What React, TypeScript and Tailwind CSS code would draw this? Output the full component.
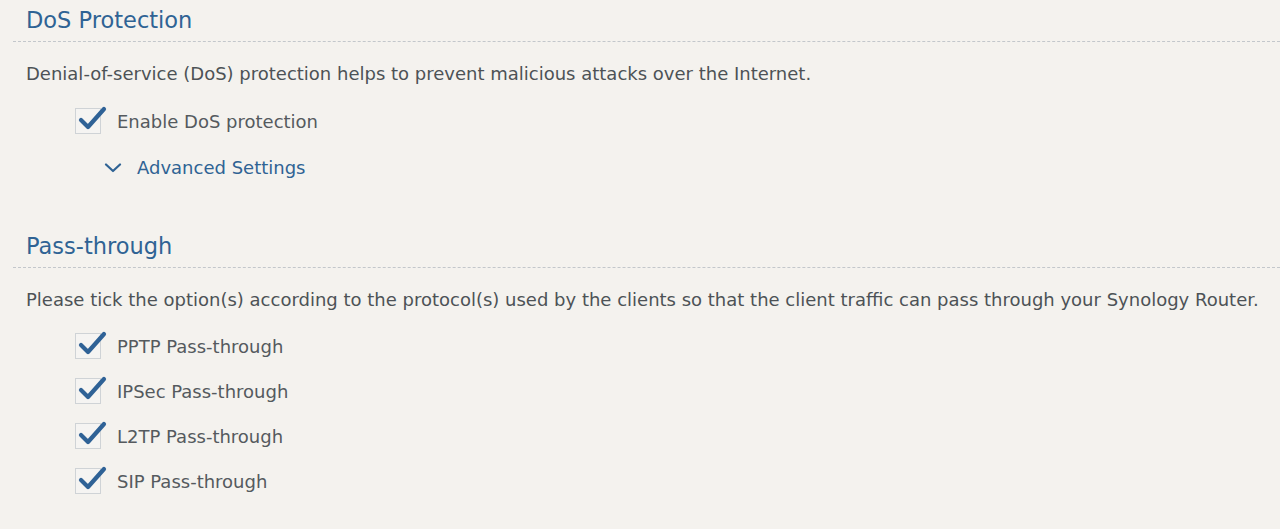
import { ReactNode } from "react";

function CheckIcon() {
  return (
    <svg viewBox="0 0 30 28" className="absolute -top-[4px] left-[1px] h-[28px] w-[30px]">
      <path d="M4 15 L11 22 L27 4" fill="none" stroke="#2f6296" strokeWidth="4.2" strokeLinecap="round" strokeLinejoin="round" />
    </svg>
  );
}

function Checkbox({ label }: { label: string }) {
  return (
    <div className="flex h-[26px] items-center gap-[16px]">
      <div className="relative h-[26px] w-[26px] shrink-0 border border-[#cfd3d6] bg-[#f5f4f2]">
        <CheckIcon />
      </div>
      <span className="text-[18px] text-[#555a5e]">{label}</span>
    </div>
  );
}

function Section({ title, desc, children }: { title: string; desc: string; children: ReactNode }) {
  return (
    <section>
      <h2 className="pl-[26px] pt-[4px] text-[22.5px] leading-[32px] text-[#2f6394]">{title}</h2>
      <div className="ml-[13px] mt-[5px] border-t border-dashed border-[#c3c7cb]" />
      <p className="mt-[21px] pl-[26px] text-[18px] leading-[22px] text-[#4d5256]">{desc}</p>
      <div className="mt-[23px] pl-[75px]">{children}</div>
    </section>
  );
}

export default function App() {
  return (
    <div className="h-[529px] w-[1280px] overflow-hidden bg-[#f4f2ee] font-['DejaVu_Sans',Verdana,sans-serif]">
      <Section title="DoS Protection" desc="Denial-of-service (DoS) protection helps to prevent malicious attacks over the Internet.">
        <Checkbox label="Enable DoS protection" />
        {/* Advanced settings toggle */}
        <div className="mt-[20px] flex items-center gap-[15px] pl-[29px]">
          <svg viewBox="0 0 18 10" className="h-[10px] w-[18px]">
            <path d="M2 1.5 L9 8 L16 1.5" fill="none" stroke="#2f6394" strokeWidth="2.2" strokeLinecap="round" strokeLinejoin="round" />
          </svg>
          <span className="text-[18px] text-[#2f6394]">Advanced Settings</span>
        </div>
      </Section>
      <div className="h-[45px]" />
      <Section
        title="Pass-through"
        desc="Please tick the option(s) according to the protocol(s) used by the clients so that the client traffic can pass through your Synology Router."
      >
        <div className="-mt-[1px] flex flex-col gap-[19px]">
          <Checkbox label="PPTP Pass-through" />
          <Checkbox label="IPSec Pass-through" />
          <Checkbox label="L2TP Pass-through" />
          <Checkbox label="SIP Pass-through" />
        </div>
      </Section>
    </div>
  );
}
